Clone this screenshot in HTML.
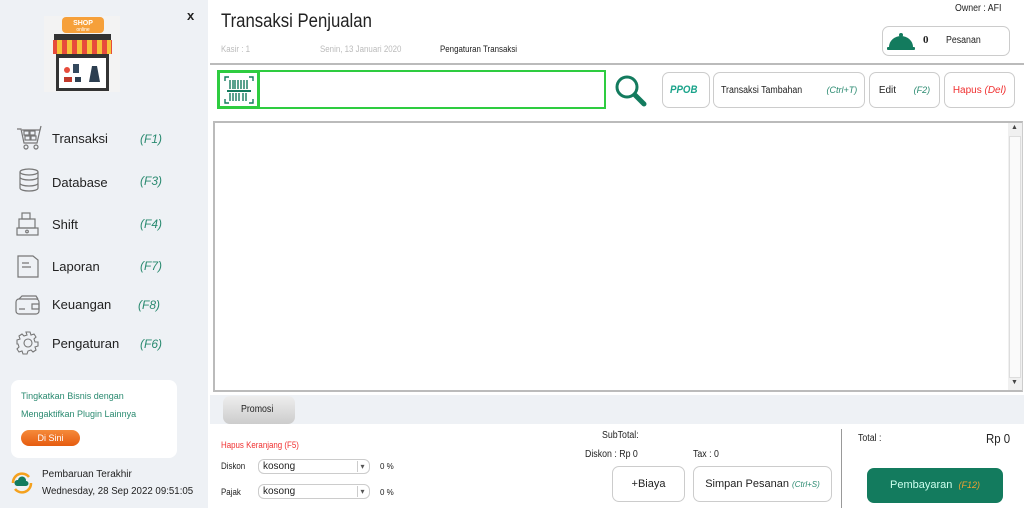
<!DOCTYPE html>
<html><head><meta charset="utf-8"><style>
*{box-sizing:border-box;margin:0;padding:0}
body{width:1024px;height:508px;overflow:hidden;background:#fff;font-family:"Liberation Sans",sans-serif;position:relative;color:#222}
.a{position:absolute}
.side{left:0;top:0;width:208px;height:508px;background:#eef1f5}
.menu{left:52px;font-size:13px;color:#222}
.fk{left:140px;font-size:12px;font-style:italic;color:#2a8a70}
.btn{position:absolute;border:1px solid #ccc;border-radius:7px;background:#fff;font-size:10px;display:flex;align-items:center;justify-content:center}
.n{transform:scaleX(.88);transform-origin:left;display:inline-block;white-space:nowrap}
.sel{position:absolute;left:258px;width:112px;height:15px;border:1px solid #ccc;border-radius:6px;font-size:10px;padding-left:4px;line-height:13px;background:#fff}
.sel:after{content:"▾";position:absolute;right:2px;top:1px;width:9px;height:11px;border-left:1px solid #ccc;font-size:8px;line-height:11px;text-align:center;color:#555}
</style></head><body>
<div class="a side"></div>
<div class="a" style="left:187px;top:8px;font-weight:bold;font-size:13px">x</div>
<svg class="a" style="left:44px;top:16px" width="76" height="76" viewBox="0 0 76 76">
<rect x="0" y="0" width="76" height="76" fill="#f3f3f3"/>
<rect x="18" y="1" width="42" height="16" rx="4" fill="#f6a03a"/>
<text x="39" y="9" font-size="7" font-weight="bold" fill="#fff" text-anchor="middle" font-family="Liberation Sans">SHOP</text>
<text x="39" y="15" font-size="5" fill="#fff" text-anchor="middle" font-family="Liberation Sans">online</text>
<rect x="10" y="18" width="57" height="6" fill="#333"/>
<rect x="9" y="24" width="59" height="14" fill="#e74c3c"/>
<g fill="#f6c33a"><rect x="13" y="24" width="5" height="14"/><rect x="23" y="24" width="5" height="14"/><rect x="33" y="24" width="5" height="14"/><rect x="43" y="24" width="5" height="14"/><rect x="53" y="24" width="5" height="14"/><rect x="63" y="24" width="4" height="14"/></g>
<rect x="12" y="38" width="53" height="37" fill="#333"/>
<rect x="15" y="42" width="47" height="30" fill="#fff"/>
<circle cx="23" cy="54" r="3" fill="#e74c3c"/><rect x="29" y="48" width="6" height="9" fill="#34495e"/><path d="M48 50l5 0 3 16h-11z" fill="#2c3e50"/><rect x="20" y="61" width="8" height="5" fill="#c0392b"/><rect x="31" y="61" width="6" height="5" fill="#2c3e50"/>
</svg>
<svg class="a" style="left:16px;top:124px" width="26" height="28" fill="none" stroke="#777" stroke-width="1.2"><path d="M1 5h4l3 14h13l3-13h-18"/><rect x="8" y="7" width="5" height="4"/><rect x="14" y="7" width="5" height="4"/><rect x="9" y="12" width="5" height="4"/><rect x="15" y="12" width="5" height="4"/><circle cx="10" cy="23" r="2"/><circle cx="20" cy="23" r="2"/><path d="M24 6l1-4"/></svg>
<div class="a menu" style="top:131px">Transaksi</div><div class="a fk" style="top:132px">(F1)</div>
<svg class="a" style="left:18px;top:168px" width="22" height="26" fill="none" stroke="#777" stroke-width="1.2"><ellipse cx="11" cy="4" rx="9" ry="3"/><path d="M2 4v16c0 4 18 4 18 0V4M2 9c0 4 18 4 18 0M2 15c0 4 18 4 18 0"/></svg>
<div class="a menu" style="top:175px">Database</div><div class="a fk" style="top:174px">(F3)</div>
<svg class="a" style="left:16px;top:211px" width="24" height="26" fill="none" stroke="#777" stroke-width="1.2"><rect x="6" y="2" width="8" height="6"/><rect x="3" y="8" width="16" height="9"/><rect x="1" y="17" width="21" height="7"/><circle cx="11" cy="20.5" r="1.3"/></svg>
<div class="a menu" style="top:217px">Shift</div><div class="a fk" style="top:217px">(F4)</div>
<svg class="a" style="left:16px;top:253px" width="24" height="26" fill="none" stroke="#777" stroke-width="1.2"><path d="M2 3h15l5 4v17H2z"/><path d="M6 10h7M6 14h9"/></svg>
<div class="a menu" style="top:259px">Laporan</div><div class="a fk" style="top:259px">(F7)</div>
<svg class="a" style="left:15px;top:294px" width="26" height="22" fill="none" stroke="#777" stroke-width="1.2"><rect x="1" y="5" width="23" height="15" rx="3"/><path d="M4 5l3-3h14l2 3M17 10h7v5h-7zM4 15h6"/></svg>
<div class="a menu" style="top:297px">Keuangan</div><div class="a fk" style="top:298px;left:138px">(F8)</div>
<svg class="a" style="left:16px;top:331px" width="24" height="24" viewBox="0 0 24 24" fill="none" stroke="#777" stroke-width="1.1"><path d="M10 1h4l1 3 3-1 2 3-2 2 1 3h3v4l-3 1 1 3-3 2-2-2-3 1-1 3h-4l-1-3-3 1-2-3 2-2-1-3H1v-4l3-1-1-3 3-2 2 2 3-1z"/><circle cx="12" cy="12" r="4"/></svg>
<div class="a menu" style="top:336px">Pengaturan</div><div class="a fk" style="top:337px">(F6)</div>
<div class="a" style="left:11px;top:380px;width:166px;height:78px;background:#fff;border-radius:8px"></div>
<div class="a" style="left:21px;top:391px;font-size:9px;color:#2a8a70">Tingkatkan Bisnis dengan</div>
<div class="a" style="left:21px;top:409px;font-size:9px;color:#2a8a70">Mengaktifkan Plugin Lainnya</div>
<div class="a" style="left:21px;top:430px;width:59px;height:16px;border-radius:8px;background:linear-gradient(#f58a3a,#e65c10);color:#fff;font-size:9px;text-align:center;line-height:16px">Di Sini</div>
<svg class="a" style="left:9px;top:470px" width="26" height="26" viewBox="0 0 26 26"><path d="M4 13a9 9 0 0 1 16-6" fill="none" stroke="#f4a11e" stroke-width="2.5"/><path d="M22 13a9 9 0 0 1-16 6" fill="none" stroke="#f4a11e" stroke-width="2.5"/><path d="M8 16a3 3 0 0 1 1-6 4 4 0 0 1 8 1 2.5 2.5 0 0 1 0 5z" fill="#137b5e"/></svg>
<div class="a" style="left:42px;top:469px;font-size:10px">Pembaruan Terakhir</div>
<div class="a" style="left:42px;top:486px;font-size:10px"><span class="n" style="transform:scaleX(.97)">Wednesday, 28 Sep 2022 09:51:05</span></div>

<div class="a" style="left:221px;top:11px;font-size:19px"><span class="n">Transaksi Penjualan</span></div>
<div class="a" style="left:221px;top:44px;font-size:9px;color:#bbb"><span class="n">Kasir : 1</span></div>
<div class="a" style="left:320px;top:44px;font-size:9px;color:#bbb"><span class="n">Senin, 13 Januari 2020</span></div>
<div class="a" style="left:440px;top:44px;font-size:9px"><span class="n">Pengaturan Transaksi</span></div>
<div class="a" style="left:955px;top:3px;font-size:10px"><span class="n">Owner : AFI</span></div>
<div class="btn" style="left:882px;top:26px;width:128px;height:30px"></div>
<svg class="a" style="left:887px;top:31px" width="28" height="20"><path d="M2 16a12 11 0 0 1 24 0z" fill="#137b5e"/><rect x="0" y="16" width="28" height="3" rx="1" fill="#137b5e"/><circle cx="14" cy="4" r="2" fill="#137b5e"/></svg>
<div class="a" style="left:923px;top:34px;font-size:11px;font-weight:bold;font-family:'Liberation Serif',serif">0</div>
<div class="a" style="left:946px;top:35px;font-size:10px"><span class="n">Pesanan</span></div>
<div class="a" style="left:210px;top:63px;width:814px;height:2px;background:#bbb"></div>

<div class="a" style="left:217px;top:70px;width:389px;height:39px;border:2px solid #2ecc40"></div>
<div class="a" style="left:217px;top:70px;width:43px;height:39px;border:3px solid #2ecc40"></div>
<svg class="a" style="left:224px;top:76px" width="30" height="28" fill="none" stroke="#137b5e" stroke-width="1.4"><path d="M1 5V1h4M25 1h4v4M1 23v4h4M29 23v4h-4"/><path d="M6 4v9M9 4v9M11 4v9M14 4v9M17 4v9M20 4v9M23 4v9M6 17v8M9 17v8M12 17v8M15 17v8M19 17v8M22 17v8"/><path d="M3 15h24" stroke-width="2"/></svg>
<svg class="a" style="left:614px;top:74px" width="34" height="34"><circle cx="13" cy="13" r="10" fill="none" stroke="#137b5e" stroke-width="3"/><path d="M21 21l9 9" stroke="#137b5e" stroke-width="5" stroke-linecap="round"/></svg>
<div class="btn" style="left:662px;top:72px;width:48px;height:36px;color:#1aa38a;font-weight:bold;font-style:italic;font-size:11px"><span class="n">PPOB</span></div>
<div class="btn" style="left:713px;top:72px;width:152px;height:36px;justify-content:space-around"><span class="n">Transaksi Tambahan</span><span style="color:#2a8a70;font-style:italic;font-size:9px">(Ctrl+T)</span></div>
<div class="btn" style="left:869px;top:72px;width:71px;height:36px;justify-content:space-around"><span>Edit</span><span style="color:#2a8a70;font-style:italic;font-size:9px">(F2)</span></div>
<div class="btn" style="left:944px;top:72px;width:71px;height:36px;color:#f03030">Hapus&nbsp;<i>(Del)</i></div>

<div class="a" style="left:213px;top:121px;width:810px;height:271px;border:2px solid #bbb;border-right:1px solid #ccc"></div>
<div class="a" style="left:1008px;top:123px;width:14px;height:267px;background:#f0f0f0"></div>
<div class="a" style="left:1011px;top:124px;font-size:7px;color:#444">▲</div>
<div class="a" style="left:1011px;top:379px;font-size:7px;color:#444">▼</div>
<div class="a" style="left:1009px;top:136px;width:12px;height:242px;background:#fafafa;border:1px solid #ddd"></div>

<div class="a" style="left:210px;top:395px;width:814px;height:29px;background:#eef1f5"></div>
<div class="a" style="left:223px;top:396px;width:72px;height:28px;border-radius:7px;background:linear-gradient(#eee,#ccc);font-size:10px;text-align:center;line-height:28px"><span class="n">Promosi</span></div>
<div class="a" style="left:221px;top:440px;font-size:9px;color:#f03030"><span class="n">Hapus Keranjang (F5)</span></div>
<div class="a" style="left:221px;top:461px;font-size:9px"><span class="n">Diskon</span></div>
<div class="sel" style="top:459px">kosong</div>
<div class="a" style="left:380px;top:462px;font-size:8px">0 %</div>
<div class="a" style="left:221px;top:487px;font-size:9px"><span class="n">Pajak</span></div>
<div class="sel" style="top:484px">kosong</div>
<div class="a" style="left:380px;top:488px;font-size:8px">0 %</div>
<div class="a" style="left:602px;top:430px;font-size:10px"><span class="n">SubTotal:</span></div>
<div class="a" style="left:585px;top:449px;font-size:10px"><span class="n">Diskon : Rp 0</span></div>
<div class="a" style="left:693px;top:449px;font-size:10px"><span class="n">Tax : 0</span></div>
<div class="btn" style="left:612px;top:466px;width:73px;height:36px;font-size:11px">+Biaya</div>
<div class="btn" style="left:693px;top:466px;width:139px;height:36px;font-size:11px"><span>Simpan Pesanan&nbsp;<i style="font-size:8px;color:#2a8a70">(Ctrl+S)</i></span></div>
<div class="a" style="left:841px;top:429px;width:1px;height:79px;background:#999"></div>
<div class="a" style="left:858px;top:433px;font-size:10px"><span class="n">Total :</span></div>
<div class="a" style="left:986px;top:431px;font-size:13px"><span class="n">Rp 0</span></div>
<div class="a" style="left:867px;top:468px;width:136px;height:35px;border-radius:7px;background:#137b5e;color:#cfe;font-size:11px;text-align:center;line-height:35px">Pembayaran&nbsp;&nbsp;<i style="color:#f0a030;font-size:9px">(F12)</i></div>
</body></html>
